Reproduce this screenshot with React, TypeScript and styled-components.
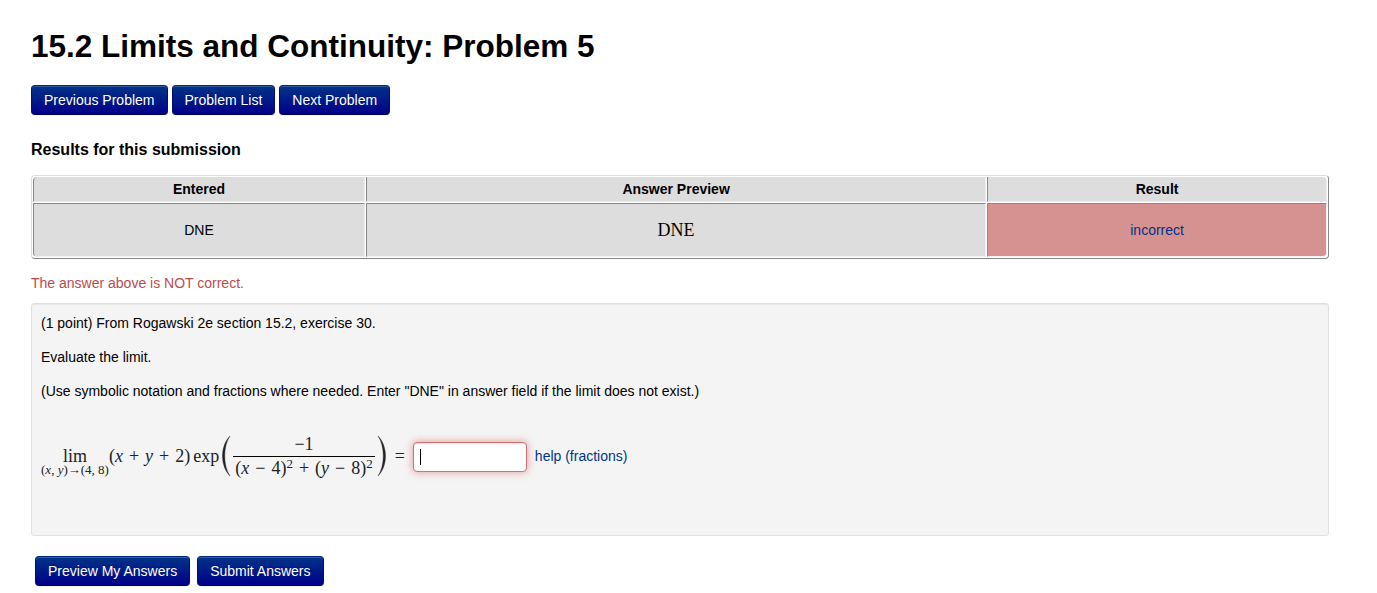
import React from "react";
import styled, { createGlobalStyle } from "styled-components";

const GlobalStyle = createGlobalStyle`
  *, *::before, *::after { box-sizing: border-box; }
  body {
    margin: 0;
    background: #fff;
    color: #000;
    font-family: "Liberation Sans", Arial, sans-serif;
    font-size: 14px;
    line-height: 20px;
  }
`;

const Page = styled.main`
  padding: 26px 48px 7px 31px;
`;

const Title = styled.h1`
  margin: 0;
  font-size: 2.25em;
  line-height: 40px;
`;

const ButtonRow = styled.div<{ $gap: number }>`
  display: flex;
  flex-wrap: wrap;
  gap: ${(p) => p.$gap}px;
`;

const NavRow = styled(ButtonRow)`
  margin-top: 19px;
`;

const SubmitRow = styled(ButtonRow)`
  margin: 20px 0 0 4px;
`;

const Button = styled.button`
  height: 30px;
  padding: 4px 12px;
  border: 1px solid;
  border-color: #002a80 #00106b #000051;
  border-radius: 4px;
  background: linear-gradient(to bottom, #003388, #000088);
  box-shadow: inset 0 1px 0 rgba(255, 255, 255, 0.2), 0 1px 2px rgba(0, 0, 0, 0.05);
  color: #fff;
  font: inherit;
  text-shadow: 0 -1px 0 rgba(0, 0, 0, 0.25);
  cursor: pointer;
`;

const Subtitle = styled.h2`
  margin: 25px 0 15px;
  font-size: 16px;
  line-height: 20px;
`;

const Results = styled.table`
  width: 100%;
  table-layout: fixed;
  border: 1px solid;
  border-color: #ddd #888 #888 #ddd;
  border-radius: 4px;
  border-collapse: separate;
  border-spacing: 1px;
  text-align: center;

  tr:first-child > th:first-child { border-top-left-radius: 4px; }
  tr:first-child > th:last-child { border-top-right-radius: 4px; }
  tr:last-child > td:first-child { border-bottom-left-radius: 4px; }
  tr:last-child > td:last-child { border-bottom-right-radius: 4px; }
`;

const HeadCell = styled.th<{ $width: string }>`
  width: ${(p) => p.$width};
  height: 25px;
  padding: 2px 5px;
  border: 1px solid;
  border-color: #888 #eee #eee #888;
  border-top: 0;
  background: #ddd;
`;

const Cell = styled.td<{ $wrong?: boolean }>`
  height: 54px;
  padding: 2px 5px;
  border: 1px solid;
  border-color: #888 #eee #eee #888;
  background: ${(p) => (p.$wrong ? "#d69191" : "#ddd")};
`;

const Link = styled.a`
  color: #003388;
  text-decoration: none;
`;

const Preview = styled.span`
  font-family: "Liberation Serif", serif;
  font-size: 18px;
`;

const Message = styled.p`
  margin: 14px 0 10px;
  color: #bd4b4b;
`;

const Problem = styled.section`
  padding: 9px 9px 57px;
  border: 1px solid #e0e0e0;
  border-radius: 3px;
  background: #f4f4f4;
  box-shadow: inset 0 1px 1px rgba(0, 0, 0, 0.05);

  p { margin: 0 0 14px; }
`;

const Equation = styled.div`
  display: flex;
  align-items: center;
  margin-top: 33px;
`;

const MathText = styled.div`
  display: flex;
  align-items: center;
  font-family: "Liberation Serif", serif;
  font-size: 18px;
  line-height: 20px;
  color: #222;
  white-space: nowrap;

  sup {
    font-size: 13px;
    line-height: 10px;
    vertical-align: 6px;
  }
`;

const Limit = styled.span`
  display: flex;
  flex-direction: column;
  align-items: center;
  padding-top: 12px;
  line-height: 16px;
`;

const Under = styled.span`
  font-size: 13px;
  line-height: 12px;
`;

const Op = styled.span`
  margin: 0 6px;
`;

const Exp = styled.span`
  margin: 0 2px 0 3px;
`;

const Fraction = styled.span`
  display: flex;
  flex-direction: column;
  align-items: center;
  margin: 0 2px;
`;

const Numerator = styled.span`
  align-self: stretch;
  padding-bottom: 2px;
  border-bottom: 1px solid #000;
  text-align: center;
`;

const Denominator = styled.span`
  padding: 1px 2px 0;
`;

const Equals = styled.span`
  margin: 0 8px;
`;

const AnswerBox = styled.label`
  position: relative;
  display: block;
  margin: 2px 8px 0 0;
`;

const Answer = styled.input`
  display: block;
  width: 114px;
  height: 30px;
  padding: 4px 6px;
  border: 1px solid #d57070;
  border-radius: 4px;
  outline: 0;
  background: #fff;
  box-shadow: inset 0 1px 1px rgba(0, 0, 0, 0.1), 0 0 8px rgba(213, 90, 90, 0.6);
  font: inherit;
  caret-color: transparent;
`;

const Caret = styled.span`
  position: absolute;
  top: 7px;
  left: 7px;
  width: 1px;
  height: 16px;
  background: #000;
`;

function Paren({ side }: { side: "left" | "right" }) {
  return (
    <svg width="10" height="44" viewBox="0 0 10 44" aria-hidden="true">
      <path
        d="M9 2C-1 12-1 32 9 42C2 32 2 12 9 2Z"
        fill="#222"
        stroke="#222"
        strokeWidth=".4"
        transform={side === "right" ? "matrix(-1 0 0 1 10 0)" : undefined}
      />
    </svg>
  );
}

export default function App() {
  return (
    <>
      <GlobalStyle />
      <Page>
        <Title>15.2 Limits and Continuity: Problem 5</Title>
        <NavRow $gap={4}>
          <Button type="button">Previous Problem</Button>
          <Button type="button">Problem List</Button>
          <Button type="button">Next Problem</Button>
        </NavRow>

        <Subtitle>Results for this submission</Subtitle>
        <Results>
          <thead>
            <tr>
              <HeadCell $width="25.7%">Entered</HeadCell>
              <HeadCell $width="48%">Answer Preview</HeadCell>
              <HeadCell $width="26.3%">Result</HeadCell>
            </tr>
          </thead>
          <tbody>
            <tr>
              <Cell>DNE</Cell>
              <Cell><Preview>DNE</Preview></Cell>
              <Cell $wrong><Link href="#answer">incorrect</Link></Cell>
            </tr>
          </tbody>
        </Results>
        <Message>The answer above is NOT correct.</Message>

        <Problem>
          <p>(1 point) From Rogawski 2e section 15.2, exercise 30.</p>
          <p>Evaluate the limit.</p>
          <p>
            (Use symbolic notation and fractions where needed. Enter "DNE" in answer field if the
            limit does not exist.)
          </p>
          <Equation>
            <MathText>
              <Limit>
                <span>lim</span>
                <Under>(<i>x</i>, <i>y</i>)→(4, 8)</Under>
              </Limit>
              <span>(<i>x</i><Op>+</Op><i>y</i><Op>+</Op>2)</span>
              <Exp>exp</Exp>
              <Paren side="left" />
              <Fraction>
                <Numerator>−1</Numerator>
                <Denominator>
                  (<i>x</i><Op>−</Op>4)<sup>2</sup><Op>+</Op>(<i>y</i><Op>−</Op>8)<sup>2</sup>
                </Denominator>
              </Fraction>
              <Paren side="right" />
              <Equals>=</Equals>
            </MathText>
            <AnswerBox>
              <Answer id="answer" type="text" aria-label="answer 1" autoFocus />
              <Caret />
            </AnswerBox>
            <Link href="#help">help (fractions)</Link>
          </Equation>
        </Problem>

        <SubmitRow $gap={7}>
          <Button type="button">Preview My Answers</Button>
          <Button type="submit">Submit Answers</Button>
        </SubmitRow>
      </Page>
    </>
  );
}
